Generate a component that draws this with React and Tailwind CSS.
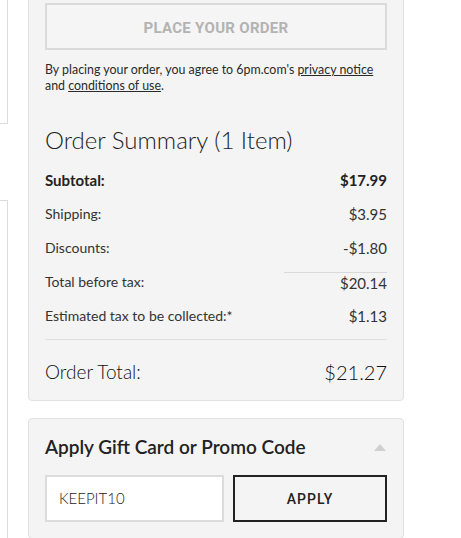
import React from 'react';

const rows = [
  { label: 'Subtotal:', value: '$17.99', bold: true },
  { label: 'Shipping:', value: '$3.95' },
  { label: 'Discounts:', value: '-$1.80' },
  { label: 'Total before tax:', value: '$20.14', rule: true },
  { label: 'Estimated tax to be collected:*', value: '$1.13' },
];

const SummaryRow = ({ label, value, bold, rule }) => (
  <div className={`h-[34px] flex items-center justify-between leading-[20px] ${bold ? 'font-bold text-[#222]' : 'font-normal text-[#333]'}`}>
    <span className={bold ? 'text-[15px]' : 'text-[14px]'}>{label}</span>
    {rule ? (
      <span className="w-[103px] text-right text-[15px] border-t border-[#d9d9d9]">{value}</span>
    ) : (
      <span className="text-[15px]">{value}</span>
    )}
  </div>
);

const App = () => {
  return (
    <div
      className="w-[461px] h-[538px] overflow-hidden bg-white flex"
      style={{ fontFamily: 'Lato, "Open Sans", sans-serif' }}
    >
      {/* left column, cut off at the edge */}
      <div className="w-[8px] shrink-0 flex flex-col">
        <div className="h-[124px] bg-white border-r border-b border-[#dcdcdc]" />
        <div className="mt-[76px] flex-1 bg-white border-r border-t border-[#dcdcdc]" />
      </div>

      <div className="ml-[20px] w-[376px] shrink-0 flex flex-col">
        {/* order card */}
        <div className="-mt-[10px] bg-[#f4f4f4] border border-[#e1e1e1] rounded-[4px] px-[16px] pt-[12px] pb-[8px]">
          <button
            type="button"
            className="w-full h-[47px] pt-[3px] border-2 border-[#dadada] bg-[#f5f5f5] text-[#b3b3b3] text-[15px] font-bold tracking-[0.3px]"
            style={{ fontFamily: 'Roboto, "Liberation Sans", sans-serif' }}
          >
            PLACE YOUR ORDER
          </button>
          <p className="mt-[12px] text-[12.4px] leading-[16px] text-[#2a2a2a]">
            By placing your order, you agree to 6pm.com's <span className="underline">privacy notice</span>
            <br />
            and <span className="underline">conditions of use</span>.
          </p>

          <h2 className="mt-[30px] text-[24px] leading-[32px] font-light text-[#222]">
            Order Summary (1 Item)
          </h2>

          <div className="mt-[7px]">
            {rows.map(row => (
              <SummaryRow key={row.label} {...row} />
            ))}
          </div>

          <div className="mt-[6px] border-t border-[#dedede]" />

          <div className="mt-[12px] h-[40px] flex items-center justify-between font-light text-[#111]">
            <span className="text-[19px]">Order Total:</span>
            <span className="text-[20px]">$21.27</span>
          </div>
        </div>

        {/* promo card */}
        <div className="mt-[17px] bg-[#f4f4f4] border border-[#e1e1e1] rounded-[4px] px-[16px] pt-[16px] pb-[16px]">
          <div className="h-[24px] flex items-center justify-between">
            <h3 className="text-[19px] leading-[24px] font-semibold text-[#222]">
              Apply Gift Card or Promo Code
            </h3>
            <svg width="12" height="7" viewBox="0 0 12 7" className="mr-[1px]">
              <path d="M6 0 L12 7 L0 7 Z" fill="#cfcfcf" />
            </svg>
          </div>
          <div className="mt-[16px] flex gap-[9px]">
            <div className="w-[179px] h-[47px] bg-white border-2 border-[#dcdcdc] flex items-center px-[12px] text-[15px] font-light text-[#222]">
              KEEPIT10
            </div>
            <button
              type="button"
              className="flex-1 h-[47px] pt-[2px] border-2 border-[#222] text-[#222] text-[14px] font-medium tracking-[1px]"
              style={{ fontFamily: 'Roboto, "Liberation Sans", sans-serif' }}
            >
              APPLY
            </button>
          </div>
        </div>
      </div>
    </div>
  );
};

export default App;
